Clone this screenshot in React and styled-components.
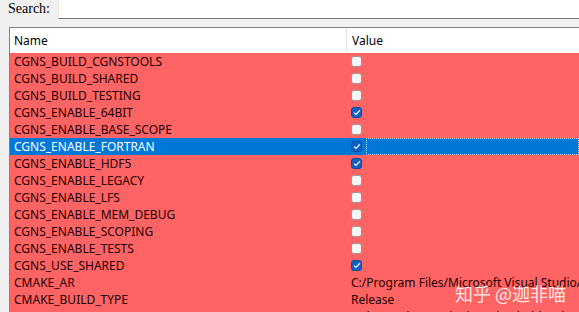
import React from 'react';
import styled, { createGlobalStyle } from 'styled-components';

const Global = createGlobalStyle`
  html, body { margin: 0; padding: 0; background: #f0f0f0; overflow: hidden; }
  #root { width: 579px; height: 312px; }
`;

const Page = styled.div`
  position: relative;
  width: 579px;
  height: 312px;
  overflow: hidden;
  background: #f0f0f0;
  font-family: 'Noto Sans', 'Open Sans', sans-serif;
`;

const SearchBar = styled.div`
  display: flex;
  align-items: stretch;
  height: 19px;
`;

const SearchLabel = styled.label`
  font-family: 'Liberation Serif', serif;
  font-size: 14px;
  color: #000;
  padding: 1px 0 0 8px;
  width: 58px;
  box-sizing: border-box;
`;

const SearchInput = styled.div`
  flex: 1;
  background: #fff;
  border-bottom: 1px solid #7a7a7a;
  border-left: 1px solid #e3e3e3;
`;

const Table = styled.div`
  margin: 8px 0 0 9px;
  border-top: 1px solid #828282;
  border-left: 1px solid #828282;
  background: #fff;
`;

const HeaderRow = styled.div`
  display: grid;
  grid-template-columns: 336px 1fr;
  height: 25px;
  background: #fff;
`;

const HeaderCell = styled.div`
  display: flex;
  align-items: center;
  padding-left: ${p => (p.first ? '4px' : '5px')};
  font-size: 12px;
  color: #000;
  border-left: ${p => (p.first ? 'none' : '1px solid #e5e5e5')};
`;

const Row = styled.div`
  display: grid;
  grid-template-columns: 336px 1fr;
  height: 17px;
  background: ${p => (p.selected ? '#0078d7' : '#ff6464')};
  color: ${p => (p.selected ? '#fff' : '#1e0000')};
  font-size: 12px;
  line-height: 17px;
`;

const NameCell = styled.div`
  padding-left: 4px;
  white-space: nowrap;
  overflow: hidden;
`;

const ValueCell = styled.div`
  display: flex;
  align-items: center;
  padding-left: 5px;
  white-space: nowrap;
  overflow: hidden;
`;

const Box = styled.span`
  display: inline-flex;
  align-items: center;
  justify-content: center;
  width: 11px;
  height: 11px;
  border-radius: 3px;
  box-sizing: border-box;
  background: ${p => (p.checked ? '#0f5fc4' : '#f6f6f6')};
  border: 1px solid ${p => (p.checked ? '#0a4da0' : '#9a9a9a')};
`;

const FocusRect = styled.span`
  flex: 1;
  align-self: stretch;
  margin-left: 4px;
  border: 1px dotted #c8dcf0;
`;

const Watermark = styled.div`
  position: absolute;
  left: 455px;
  top: 280px;
  font-family: 'Noto Sans CJK SC', sans-serif;
  font-size: 18px;
  color: rgba(255, 255, 255, 0.85);
  pointer-events: none;
`;

const Check = () => (
  <svg width="8" height="7" viewBox="0 0 8 7">
    <path d="M1 3.6 L3 5.5 L7 1.2" fill="none" stroke="#fff" strokeWidth="1.2" />
  </svg>
);

const rows = [
  ['CGNS_BUILD_CGNSTOOLS', false],
  ['CGNS_BUILD_SHARED', false],
  ['CGNS_BUILD_TESTING', false],
  ['CGNS_ENABLE_64BIT', true],
  ['CGNS_ENABLE_BASE_SCOPE', false],
  ['CGNS_ENABLE_FORTRAN', true, true],
  ['CGNS_ENABLE_HDF5', true],
  ['CGNS_ENABLE_LEGACY', false],
  ['CGNS_ENABLE_LFS', false],
  ['CGNS_ENABLE_MEM_DEBUG', false],
  ['CGNS_ENABLE_SCOPING', false],
  ['CGNS_ENABLE_TESTS', false],
  ['CGNS_USE_SHARED', true],
  ['CMAKE_AR', 'C:/Program Files/Microsoft Visual Studio/2019/Community/VC/Tools/MSVC/bin/lib.exe'],
  ['CMAKE_BUILD_TYPE', 'Release'],
  ['CMAKE_CONFIGURATION_TYPES', 'Debug;Release;MinSizeRel;RelWithDebInfo'],
];

export default function App() {
  return (
    <Page>
      <Global />
      <SearchBar>
        <SearchLabel>Search:</SearchLabel>
        <SearchInput />
      </SearchBar>
      <Table>
        <HeaderRow>
          <HeaderCell first>Name</HeaderCell>
          <HeaderCell>Value</HeaderCell>
        </HeaderRow>
        {rows.map(([name, value, selected]) => (
          <Row key={name} selected={selected}>
            <NameCell>{name}</NameCell>
            <ValueCell>
              {typeof value === 'boolean' ? (
                <Box checked={value}>{value && <Check />}</Box>
              ) : (
                value
              )}
              {selected && <FocusRect />}
            </ValueCell>
          </Row>
        ))}
      </Table>
      <Watermark>知乎 @迦非喵</Watermark>
    </Page>
  );
}
